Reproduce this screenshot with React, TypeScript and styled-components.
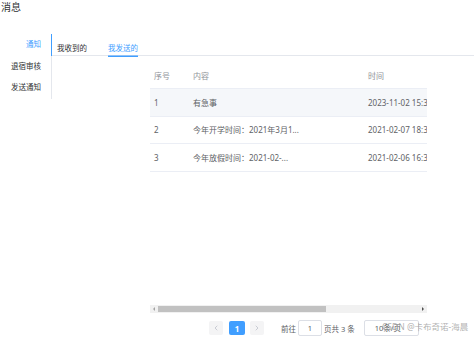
import styled, { createGlobalStyle } from "styled-components";
import { ChevronLeft, ChevronRight } from "lucide-react";

const GlobalStyle = createGlobalStyle`
  body {
    margin: 0;
    background: #ffffff;
    font-family: "Noto Sans", "Noto Sans CJK SC", sans-serif;
    color: #606266;
  }
`;

const Page = styled.div`
  position: relative;
  width: 474px;
  height: 337px;
  overflow: hidden;
`;

const Title = styled.h1`
  margin: 0;
  padding-left: 1px;
  font-size: 10px;
  line-height: 14px;
  font-weight: 400;
  color: #303133;
`;

const Body = styled.div`
  display: flex;
  margin-top: 20px;
`;

const SideMenu = styled.div`
  width: 52px;
  flex-shrink: 0;
`;

const MenuItem = styled.div<{ $active?: boolean }>`
  height: 21.5px;
  line-height: 21.5px;
  padding-right: 10px;
  text-align: right;
  font-size: 7.5px;
  color: ${({ $active }) => ($active ? "#409eff" : "#303133")};
  border-right: 1.5px solid ${({ $active }) => ($active ? "#409eff" : "#e4e7ed")};
`;

const Pane = styled.div`
  flex: 1;
  min-width: 0;
`;

const TabBar = styled.div`
  display: flex;
  height: 21px;
  border-bottom: 1px solid #e4e7ed;
`;

const Tab = styled.div`
  padding: 0 10.5px;
  height: 100%;
  &:first-child {
    padding-left: 5px;
  }
`;

const TabLabel = styled.span<{ $active?: boolean }>`
  display: inline-block;
  box-sizing: border-box;
  height: 100%;
  padding-top: 3px;
  line-height: 18px;
  font-size: 7.5px;
  color: ${({ $active }) => ($active ? "#409eff" : "#303133")};
  box-shadow: ${({ $active }) => ($active ? "inset 0 -1.5px 0 #409eff" : "none")};
`;

const TabContent = styled.div`
  padding: 6px 0 0 98px;
`;

const TableBox = styled.div`
  width: 277px;
`;

const TableView = styled.div`
  height: 243px;
  overflow: hidden;
`;

const Row = styled.div<{ $head?: boolean; $highlight?: boolean }>`
  display: grid;
  grid-template-columns: 39px 175px 110px 119px;
  width: 443px;
  box-sizing: border-box;
  height: ${({ $head }) => ($head ? "27px" : "27.5px")};
  align-items: center;
  border-bottom: 1px solid #ebeef5;
  background: ${({ $highlight }) => ($highlight ? "#f5f7fa" : "#ffffff")};
  font-size: 8px;
  color: ${({ $head }) => ($head ? "#909399" : "#606266")};
`;

const Cell = styled.div`
  padding: 0 4px;
  white-space: nowrap;
  overflow: hidden;
`;

const ScrollBar = styled.div`
  display: flex;
  align-items: center;
  height: 8px;
  background: #f1f1f1;
`;

const ScrollArrow = styled.div<{ $dir: "left" | "right" }>`
  width: 8px;
  height: 8px;
  display: flex;
  align-items: center;
  justify-content: center;
  flex-shrink: 0;
  &::before {
    content: "";
    border-top: 2px solid transparent;
    border-bottom: 2px solid transparent;
    ${({ $dir }) =>
      $dir === "left" ? "border-right: 2.5px solid #a3a3a3;" : "border-left: 2.5px solid #505050;"}
  }
`;

const ScrollTrack = styled.div`
  flex: 1;
  height: 100%;
  display: flex;
  align-items: center;
`;

const ScrollThumb = styled.div`
  height: 6px;
  background: #c1c1c1;
`;

const Pagination = styled.div`
  display: flex;
  align-items: center;
  height: 16px;
  margin-top: 7px;
  padding-left: 59px;
  font-size: 7.5px;
  color: #606266;
  white-space: nowrap;
`;

const PageButton = styled.div<{ $active?: boolean }>`
  width: ${({ $active }) => ($active ? "16px" : "14px")};
  height: 14px;
  margin-right: ${({ $active }) => ($active ? "5px" : "6px")};
  border-radius: 2px;
  display: flex;
  align-items: center;
  justify-content: center;
  background: ${({ $active }) => ($active ? "#409eff" : "#f4f4f5")};
  color: ${({ $active }) => ($active ? "#ffffff" : "#c0c4cc")};
  font-weight: 700;
  font-size: 8px;
`;

const Jumper = styled.span<{ $gap: number }>`
  margin-left: ${({ $gap }) => $gap}px;
`;

const Field = styled.div<{ $width: number; $pad: number }>`
  box-sizing: border-box;
  width: ${({ $width }) => $width}px;
  height: 16px;
  margin-left: 2px;
  padding-left: ${({ $pad }) => $pad}px;
  line-height: 14px;
  border: 1px solid #dcdfe6;
  border-radius: 2px;
  font-size: 7.5px;
  color: #606266;
  text-align: ${({ $pad }) => ($pad ? "left" : "center")};
`;

const Watermark = styled.div`
  position: absolute;
  left: 382px;
  top: 320px;
  font-size: 8.5px;
  line-height: 14px;
  color: rgba(150, 150, 150, 0.75);
  white-space: nowrap;
`;

const rows = [
  { no: "1", content: "有急事", time: "2023-11-02 15:30:21" },
  { no: "2", content: "今年开学时间：2021年3月1...", time: "2021-02-07 18:30:12" },
  { no: "3", content: "今年放假时间：2021-02-...", time: "2021-02-06 16:30:45" },
];

export default function App() {
  return (
    <Page>
      <GlobalStyle />
      <Title>消息</Title>
      <Body>
        <SideMenu>
          <MenuItem $active>通知</MenuItem>
          <MenuItem>退宿审核</MenuItem>
          <MenuItem>发送通知</MenuItem>
        </SideMenu>
        <Pane>
          <TabBar>
            <Tab>
              <TabLabel>我收到的</TabLabel>
            </Tab>
            <Tab>
              <TabLabel $active>我发送的</TabLabel>
            </Tab>
          </TabBar>
          <TabContent>
            <TableBox>
              <TableView>
                <Row $head>
                  <Cell>序号</Cell>
                  <Cell>内容</Cell>
                  <Cell>时间</Cell>
                  <Cell>操作</Cell>
                </Row>
                {rows.map((r, i) => (
                  <Row key={r.no} $highlight={i === 0}>
                    <Cell>{r.no}</Cell>
                    <Cell>{r.content}</Cell>
                    <Cell>{r.time}</Cell>
                    <Cell />
                  </Row>
                ))}
              </TableView>
              <ScrollBar>
                <ScrollArrow $dir="left" />
                <ScrollTrack>
                  <ScrollThumb style={{ width: `${(168 / 261) * 100}%` }} />
                </ScrollTrack>
                <ScrollArrow $dir="right" />
              </ScrollBar>
            </TableBox>
            <Pagination>
              <PageButton>
                <ChevronLeft size={8} strokeWidth={2.5} />
              </PageButton>
              <PageButton $active>1</PageButton>
              <PageButton>
                <ChevronRight size={8} strokeWidth={2.5} />
              </PageButton>
              <Jumper $gap={11}>前往</Jumper>
              <Field $width={24} $pad={0}>1</Field>
              <Jumper $gap={2}>页共 3 条</Jumper>
              <Jumper $gap={7}>
                <Field $width={55} $pad={10}>10条/页</Field>
              </Jumper>
            </Pagination>
          </TabContent>
        </Pane>
      </Body>
      <Watermark>CSDN @卡布奇诺-海晨</Watermark>
    </Page>
  );
}
